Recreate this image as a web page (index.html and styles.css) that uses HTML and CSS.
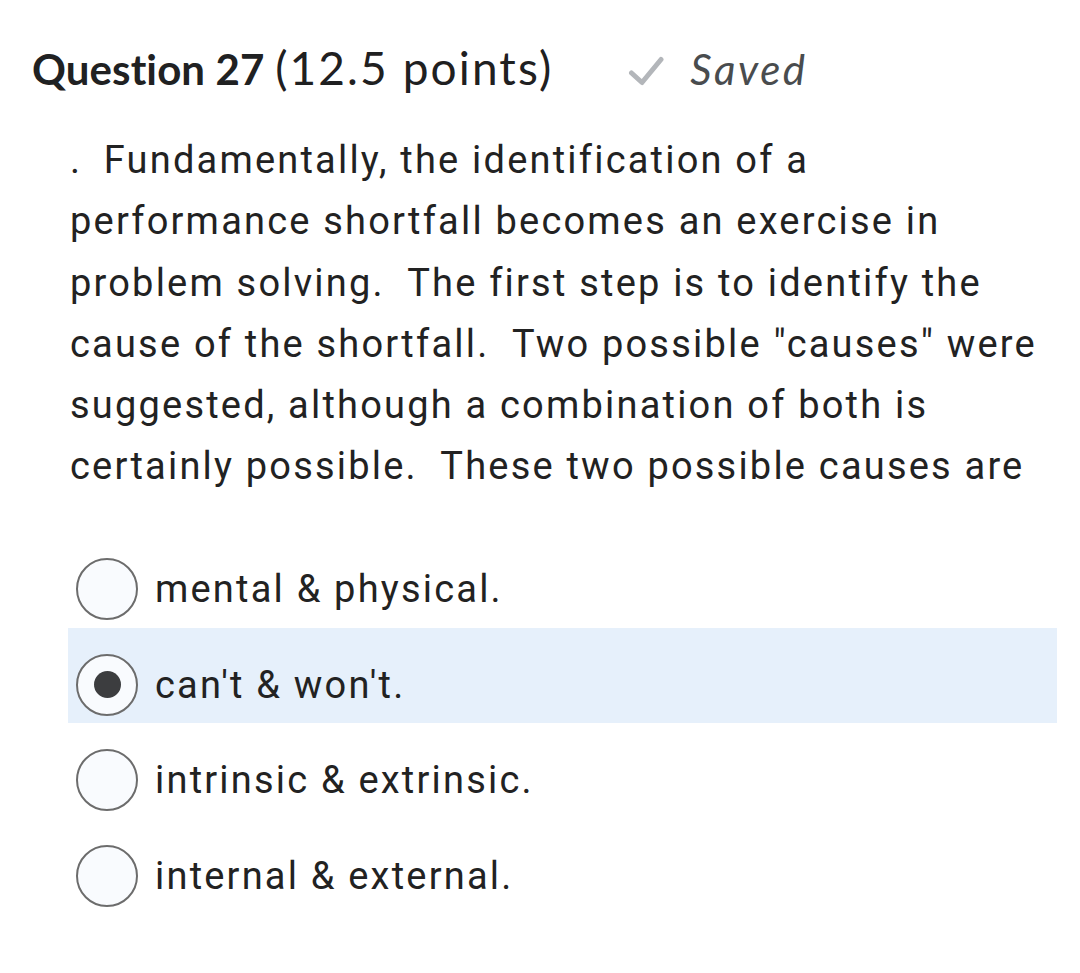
FILE: index.html
```html
<!DOCTYPE html>
<html lang="en">
<head>
<meta charset="utf-8">
<title>Question 27</title>
<link rel="stylesheet" href="styles.css">
</head>
<body>
<div class="page">
  <header class="q-header">
    <h2 class="q-title"><strong>Question 27</strong> <span class="points">(12.5 points)</span></h2>
    <span class="saved">
      <svg class="check" viewBox="0 0 36 30" width="36" height="30" aria-hidden="true">
        <path d="M3.5 17 L14 26.5 L33 3.5" fill="none" stroke="#b3b6ba" stroke-width="5" stroke-linecap="round" stroke-linejoin="round"/>
      </svg>
      <span class="saved-text">Saved</span>
    </span>
  </header>

  <p class="q-text">.&ensp;Fundamentally, the identification of a performance shortfall becomes an exercise in problem solving.&nbsp; The first step is to identify the cause of the shortfall.&nbsp; Two possible "causes" were suggested, although a combination of both is certainly possible.&nbsp; These two possible causes are</p>

  <div class="options">
    <label class="option">
      <span class="radio"></span>
      <span class="opt-text">mental &amp; physical.</span>
    </label>
    <label class="option selected">
      <span class="radio"><span class="dot"></span></span>
      <span class="opt-text">can't &amp; won't.</span>
    </label>
    <label class="option">
      <span class="radio"></span>
      <span class="opt-text">intrinsic &amp; extrinsic.</span>
    </label>
    <label class="option">
      <span class="radio"></span>
      <span class="opt-text">internal &amp; external.</span>
    </label>
  </div>
</div>
</body>
</html>
```

FILE: styles.css
```css
html, body {
  margin: 0;
  padding: 0;
  background: #ffffff;
}

.page {
  padding: 40px 23px 0 32px;
}

.q-header {
  display: flex;
  align-items: baseline;
  gap: 75px;
}

.q-title {
  margin: 0;
  font-family: Lato, "Open Sans", sans-serif;
  font-size: 42px;
  font-weight: 400;
  line-height: 1.2;
  color: #202122;
  white-space: nowrap;
  font-variant-ligatures: none;
  font-feature-settings: "liga" 0, "clig" 0, "dlig" 0, "calt" 0;
}

.q-title strong {
  font-weight: 700;
  letter-spacing: 0.1px;
}

.points {
  font-size: 46px;
  letter-spacing: 2.1px;
  color: #1f2021;
}

.saved {
  display: flex;
  align-items: baseline;
  gap: 26px;
}

.check {
  align-self: center;
  position: relative;
  top: 2px;
}

.saved-text {
  font-family: Lato, "Open Sans", sans-serif;
  font-style: italic;
  font-size: 42px;
  line-height: 1.2;
  letter-spacing: 2.5px;
  color: #494c4e;
}

.q-text {
  width: 978px;
  margin: 35px 0 0 38px;
  font-family: Roboto, "Noto Sans", sans-serif;
  font-size: 38px;
  letter-spacing: 2.2px;
  line-height: 61.2px;
  color: #222222;
}

.options {
  margin: 35px 0 0 36px;
  display: flex;
  flex-direction: column;
}

.option {
  display: flex;
  align-items: center;
  height: 95.5px;
  box-sizing: border-box;
  padding: 18px 0 0 8px;
  gap: 17px;
}

.option.selected {
  background: #e6f0fb;
}

.radio {
  width: 62px;
  height: 62px;
  box-sizing: border-box;
  border: 2px solid #6c6c6c;
  border-radius: 50%;
  background: #f9fbfe;
  display: flex;
  align-items: center;
  justify-content: center;
  flex: none;
}

.dot {
  width: 27px;
  height: 27px;
  border-radius: 50%;
  background: #3c3d3f;
}

.opt-text {
  font-family: Roboto, "Noto Sans", sans-serif;
  font-size: 38px;
  letter-spacing: 2.2px;
  line-height: 62px;
  color: #222222;
}
```
